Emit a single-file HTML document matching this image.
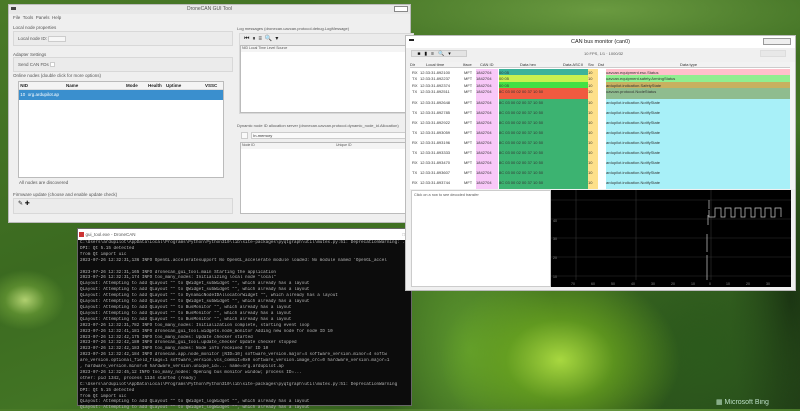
<!DOCTYPE html><html><head><meta charset="utf-8"><style>
*{margin:0;padding:0;box-sizing:border-box}
body{width:800px;height:409px;overflow:hidden;position:relative;font-family:"Liberation Sans",sans-serif;font-size:5px;color:#333;
background:
radial-gradient(ellipse 40px 30px at 25px 300px,#b0d070 0%,rgba(120,170,60,.5) 50%,transparent 100%),
radial-gradient(ellipse 120px 90px at 560px 360px,#a8d840 0%,rgba(110,170,30,.7) 45%,transparent 100%),
radial-gradient(ellipse 90px 140px at 470px 350px,#5f9a2e 0%,transparent 100%),
radial-gradient(ellipse 110px 120px at 700px 350px,#2c5a1c 0%,transparent 100%),
radial-gradient(ellipse 60px 180px at 790px 300px,#1a3312 0%,transparent 100%),
radial-gradient(ellipse 300px 60px at 600px 10px,#6a9a40 0%,transparent 100%),
linear-gradient(160deg,#4a7a28 0%,#3b6a20 40%,#427424 60%,#26481a 100%);}
.abs{position:absolute}
.win{position:absolute;background:#efefef;border:1px solid #bbb}
.tb{height:8px;background:#e8e8e8;text-align:center;font-size:5px;line-height:8px;color:#555}
.lbl{position:absolute;font-size:4.5px;color:#555;white-space:nowrap}
.box{position:absolute;border:1px solid #d8d8d8;background:#ebebeb}
.w{position:absolute;background:#fff;border:1px solid #bbb}
.r{position:absolute;left:0;width:380px;height:10px;font-size:4px;line-height:7px;color:#333;white-space:nowrap}
.r span{position:absolute;top:0;height:100%;overflow:hidden}
.term div{white-space:nowrap;font-family:"Liberation Mono",monospace;font-size:4.3px;line-height:5.9px;color:#b8b8b8;overflow:hidden}
</style></head><body>

<!-- main window -->
<div class="win" style="left:8px;top:4px;width:403px;height:219px">
 <div class="tb" style="height:9px">DroneCAN GUI Tool<span style="position:absolute;right:2px;top:1px;width:14px;height:6px;border:1px solid #888;background:#fff"></span><span style="position:absolute;left:2px;top:2px;width:5px;height:3px;background:#444"></span></div>
 <div class="lbl" style="left:4px;top:10px">File&nbsp;&nbsp;Tools&nbsp;&nbsp;Panels&nbsp;&nbsp;Help</div>
 <div class="lbl" style="left:4px;top:20px">Local node properties</div>
 <div class="box" style="left:4px;top:26px;width:220px;height:15px"></div>
 <div class="lbl" style="left:9px;top:31px">Local node ID: <span style="display:inline-block;width:18px;height:6px;border:1px solid #ccc;background:#f6f6f6;vertical-align:middle"></span></div>
 <div class="lbl" style="left:4px;top:47px">Adapter Settings</div>
 <div class="box" style="left:4px;top:52px;width:220px;height:15px"></div>
 <div class="lbl" style="left:9px;top:57px">Send CAN FDs <span style="display:inline-block;width:5px;height:5px;border:1px solid #ccc;background:#fff;vertical-align:middle"></span></div>
 <div class="lbl" style="left:4px;top:68px">Online nodes (double click for more options)</div>
 <div class="w" style="left:9px;top:76px;width:206px;height:97px"></div>
 <div class="abs" style="left:10px;top:77px;width:204px;height:8px;background:#f4f4f4;border-bottom:1px solid #ddd;font-size:4.5px;font-weight:bold;color:#222;line-height:8px">&nbsp;NID<span style="position:absolute;left:47px">Name</span><span style="position:absolute;left:107px">Mode</span><span style="position:absolute;left:129px">Health</span><span style="position:absolute;left:147px">Uptime</span><span style="position:absolute;left:186px">VSSC</span></div>
 <div class="abs" style="left:10px;top:85px;width:204px;height:10px;background:#3a8fce;color:#fff;font-size:4.5px;line-height:9px">&nbsp;10&nbsp;&nbsp;org.ardupilot.ap</div>
 <div class="lbl" style="left:10px;top:175px">All nodes are discovered</div>
 <div class="lbl" style="left:4px;top:187px">Firmware update (choose and enable update check)</div>
 <div class="box" style="left:4px;top:193px;width:220px;height:16px"></div>
 <div class="abs" style="left:9px;top:195px;width:16px;height:7px;font-size:6px;color:#111">✎ ✚</div>
 <div class="lbl" style="left:228px;top:21px;font-size:4px">Log messages (dronecan.uavcan.protocol.debug.LogMessage)</div>
 <div class="box" style="left:230px;top:28px;width:175px;height:81px"></div>
 <div class="abs" style="left:235px;top:30px;font-size:6px;color:#222;letter-spacing:3px">⏮⏸≡🔍▾</div>
 <div class="w" style="left:231px;top:40px;width:173px;height:68px"></div>
 <div class="abs" style="left:232px;top:41px;width:171px;height:6px;background:#f4f4f4;font-size:3.5px;color:#555;white-space:nowrap">&nbsp;NID Local Time Level Source</div>
 <div class="lbl" style="left:228px;top:118px;font-size:4px">Dynamic node ID allocation server (dronecan.uavcan.protocol.dynamic_node_id.Allocation)</div>
 <div class="abs" style="left:232px;top:127px;width:7px;height:7px;background:#fafafa;border:1px solid #ccc"></div>
 <div class="abs" style="left:242px;top:127px;width:161px;height:7px;background:#fafafa;border:1px solid #ccc;font-size:4px;line-height:6px">&nbsp;In-memory</div>
 <div class="w" style="left:231px;top:137px;width:173px;height:72px"></div>
 <div class="abs" style="left:232px;top:138px;width:171px;height:6px;background:#f4f4f4;font-size:3.5px;color:#555">&nbsp;Node ID<span style="position:absolute;left:95px">Unique ID</span></div>
</div>

<!-- terminal -->
<div class="abs" style="left:77px;top:228px;width:335px;height:178px;background:#0c0c0c;border:1px solid #666">
 <div style="height:11px;background:#fff;font-size:4.5px;line-height:11px;color:#555">&nbsp;<span style="display:inline-block;width:5px;height:5px;background:#c33;vertical-align:middle"></span> gui_tool.exe - DroneCAN<span style="position:absolute;right:6px;color:#999">□</span></div>
 <div class="term" style="padding:0 2px">
 <div>C:\Users\ardupilot\AppData\Local\Programs\Python\Python310\lib\site-packages\pyqtgraph\util\mutex.py:51: DeprecationWarning: ...</div>
 <div>  DPI: Qt 5.15 detected</div><div>    from Qt import uic</div>
 <div>2023-07-26 12:32:31,136 INFO OpenGL.acceleratesupport No OpenGL_accelerate module loaded: No module named 'OpenGL_accel</div><div>&nbsp;</div>
 <div>2023-07-26 12:32:31,165 INFO dronecan_gui_tool.main Starting the application</div>
 <div>2023-07-26 12:32:31,174 INFO too_many_nodes: Initializing local node "local"</div>
 <div>QLayout: Attempting to add QLayout "" to QWidget_subWidget "", which already has a layout</div>
 <div>QLayout: Attempting to add QLayout "" to QWidget_subWidget "", which already has a layout</div>
 <div>QLayout: Attempting to add QLayout "" to DynamicNodeIDAllocatorWidget "", which already has a layout</div>
 <div>QLayout: Attempting to add QLayout "" to QWidget_subWidget "", which already has a layout</div>
 <div>QLayout: Attempting to add QLayout "" to BusMonitor "", which already has a layout</div>
 <div>QLayout: Attempting to add QLayout "" to BusMonitor "", which already has a layout</div>
 <div>QLayout: Attempting to add QLayout "" to BusMonitor "", which already has a layout</div>
 <div>2023-07-26 12:32:31,782 INFO too_many_nodes: Initialization complete, starting event loop</div>
 <div>2023-07-26 12:32:41,181 INFO dronecan_gui_tool.widgets.node_monitor Adding new node for node ID 10</div>
 <div>2023-07-26 12:32:42,175 INFO too_many_nodes: Update checker started</div>
 <div>2023-07-26 12:32:42,180 INFO dronecan_gui_tool.update_checker Update checker stopped</div>
 <div>2023-07-26 12:32:42,183 INFO too_many_nodes: Node info received for ID 10</div>
 <div>2023-07-26 12:32:42,184 INFO dronecan.app.node_monitor [NID=10] software_version.major=4 software_version.minor=4 softw</div>
 <div>are_version.optional_field_flags=1 software_version.vcs_commit=0x0 software_version.image_crc=0 hardware_version.major=1</div>
 <div>, hardware_version.minor=0 hardware_version.unique_id=... name=org.ardupilot.ap</div>
 <div>2023-07-26 12:32:45,12 INFO too_many_nodes: Opening bus monitor window; process ID=...</div>
 <div>other: pid 1342, process 1134 started (ready)</div>
 <div>C:\Users\ardupilot\AppData\Local\Programs\Python\Python310\lib\site-packages\pyqtgraph\util\mutex.py:51: DeprecationWarning</div>
 <div>  DPI: Qt 5.15 detected</div><div>    from Qt import uic</div>
 <div>QLayout: Attempting to add QLayout "" to QWidget_logWidget "", which already has a layout</div>
 <div>QLayout: Attempting to add QLayout "" to QWidget_logWidget "", which already has a layout</div>
 </div>
</div>

<!-- bus monitor -->
<div class="win" style="left:405px;top:35px;width:391px;height:256px;background:#f0f0f0">
 <div class="tb" style="height:12px;background:#fff;line-height:12px;font-size:5.5px;color:#222">CAN bus monitor (can0)<span style="position:absolute;right:4px;top:2px;width:28px;height:7px;border:1px solid #999;background:#eee"></span><span style="position:absolute;left:3px;top:3px;width:5px;height:4px;border-top:2px solid #222"></span></div>
 <div class="abs" style="left:5px;top:14px;width:56px;height:7px;background:#e4e4e4;border:1px solid #ccc;font-size:5px;line-height:6px;letter-spacing:4px;color:#111;white-space:nowrap">&nbsp;■▮≡🔍▾</div>
 <div class="lbl" style="left:178px;top:15px;font-size:4px">10 FPS, 1/1 · 1000/32</div>
 <div class="abs" style="left:354px;top:14px;width:26px;height:7px;background:#e8e8e8;border:1px solid #ddd"></div>
 <div class="abs" style="left:4px;top:26px;width:381px;height:127px;background:#fff;overflow:hidden">
  <div class="abs" style="left:0;top:0;width:381px;height:6px;background:#f2f2f2;border-bottom:1px solid #ccc;font-size:4px;line-height:6px;color:#333">Dir<span style="position:absolute;left:16px">Local time</span><span style="position:absolute;left:53px">Iface</span><span style="position:absolute;left:70px">CAN ID</span><span style="position:absolute;left:110px">Data hex</span><span style="position:absolute;left:153px">Data ASCII</span><span style="position:absolute;left:178px">Src</span><span style="position:absolute;left:188px">Dst</span><span style="position:absolute;left:270px">Data type</span></div>
  <div id="rows"></div>
 </div>
 <div class="abs" style="left:384px;top:26px;width:5px;height:127px;background:#f4f4f4"></div>
 <div class="abs" style="left:5px;top:154px;width:140px;height:97px;background:#fff;border:1px solid #ccc"><span style="font-size:3.8px;color:#555;position:absolute;left:2px;top:2px;white-space:nowrap">Click on a row to see decoded transfer</span></div>
 <div class="abs" style="left:145px;top:154px;width:240px;height:97px;background:#000">
  <svg width="240" height="97" style="position:absolute;left:0;top:0">
   <g stroke="#333" stroke-width="0.6">
    <line x1="0" y1="10" x2="240" y2="10"/><line x1="0" y1="29" x2="240" y2="29"/><line x1="0" y1="48" x2="240" y2="48"/><line x1="0" y1="67" x2="240" y2="67"/><line x1="0" y1="86" x2="240" y2="86"/>
    <line x1="25" y1="0" x2="25" y2="90"/><line x1="85" y1="0" x2="85" y2="90"/><line x1="160" y1="0" x2="160" y2="90"/>
   </g>
   <g stroke="#ccc" stroke-width="0.7" fill="none">
    <path d="M158 10 v9 M158 20 v7 h6 v-9 h6 v9 h4 v-9 h6 v9 h4 v-9 h6 v9 h4 v-9 h6 v9 h4 v-9 h6 v9 h4 v-9 h6 v9 h4 v-9 h6 v9"/>
    <path d="M157 35 v-10 M156 90 v-25 M156 62 v-18"/>
   </g>
   <g fill="#888" font-size="3.5" font-family="Liberation Sans"><text x="2" y="32">40</text><text x="2" y="50">30</text><text x="2" y="69">20</text><text x="2" y="88">10</text>
   <text x="20" y="95">70</text><text x="40" y="95">60</text><text x="60" y="95">50</text><text x="80" y="95">40</text><text x="100" y="95">30</text><text x="120" y="95">20</text><text x="140" y="95">10</text><text x="158" y="95">0</text><text x="175" y="95">10</text><text x="195" y="95">20</text><text x="215" y="95">30</text></g>
  </svg>
 </div>
</div>

<div class="abs" style="left:716px;top:398px;font-size:7px;color:#dfe;opacity:.8;white-space:nowrap">▦ Microsoft Bing</div>

<script>
var rows=[
[0,6,'#3cb39a','#ffc0cb','uavcan.equipment.esc.Status'],
[6,7,'#c8f050','#90ee90','uavcan.equipment.safety.ArmingStatus'],
[13,6,'#44e044','#c8b060','ardupilot.indication.SafetyState'],
[19,11,'#f05a40','#8fbc8f','uavcan.protocol.NodeStatus'],
[30,10,'#3cb371','#a8f0f8','ardupilot.indication.NotifyState'],
[40,10,'#3cb371','#a8f0f8','ardupilot.indication.NotifyState'],
[50,10,'#3cb371','#a8f0f8','ardupilot.indication.NotifyState'],
[60,10,'#3cb371','#a8f0f8','ardupilot.indication.NotifyState'],
[70,10,'#3cb371','#a8f0f8','ardupilot.indication.NotifyState'],
[80,10,'#3cb371','#a8f0f8','ardupilot.indication.NotifyState'],
[90,10,'#3cb371','#a8f0f8','ardupilot.indication.NotifyState'],
[100,10,'#3cb371','#a8f0f8','ardupilot.indication.NotifyState'],
[110,10,'#3cb371','#a8f0f8','ardupilot.indication.NotifyState'],
[120,10,'#40f0f0','#a8f0f8','ardupilot.indication.NotifyState']];
var h='';rows.forEach(function(r,i){h+='<div class="r" style="top:'+(7+r[0])+'px;height:'+r[1]+'px"><span style="left:2px">'+(i%2?'TX':'RX')+'</span><span style="left:10px">12:33:31.8'+(92100+i*137)+'</span><span style="left:54px">MFT</span><span style="left:66px;width:22px;background:#f8c8f8">1842704</span><span style="left:89px;width:89px;background:'+r[2]+'">'+(i>2?'8C 03 00 02 00 37 10 50':'00 05')+'</span><span style="left:178px;width:10px;background:#fde08a">10</span><span style="left:196px;width:185px;background:'+r[3]+'">'+r[4]+'</span></div>'});
document.getElementById('rows').innerHTML=h;
</script>
</body></html>
